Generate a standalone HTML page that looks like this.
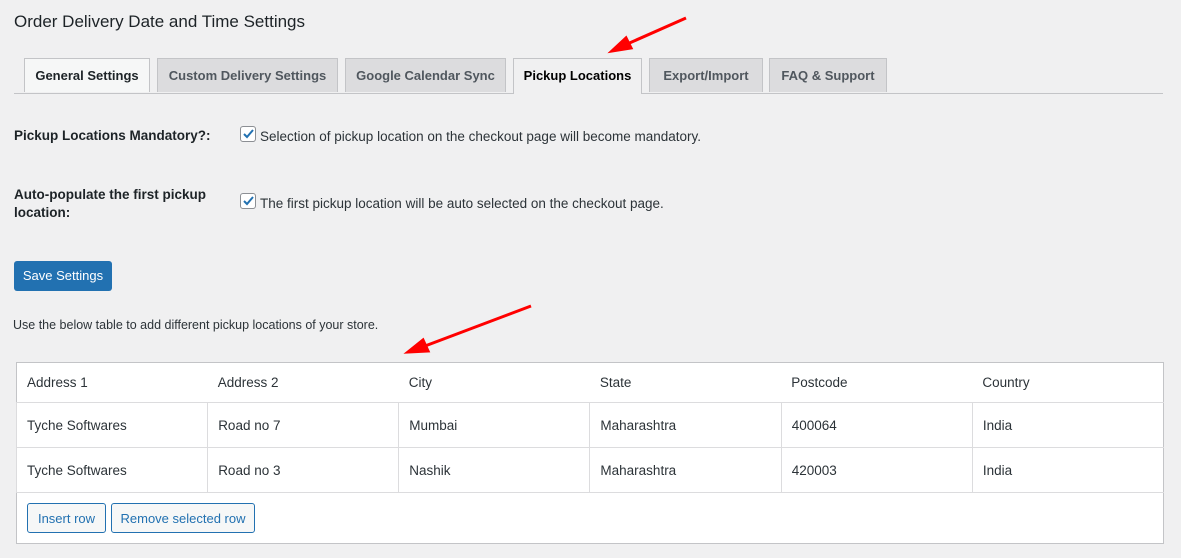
<!DOCTYPE html><html><head><style>
body{margin:0;background:#f0f0f1;font-family:"Liberation Sans",sans-serif;color:#1d2327;width:1181px;height:558px;overflow:hidden;position:relative;font-size:13px}
.a{position:absolute}
.tab{position:absolute;top:58px;height:34px;border:1px solid #c3c4c7;border-bottom:none;background:#dcdcde;font-weight:bold;font-size:13px;color:#50575e;line-height:34px;text-align:center;box-sizing:border-box}
.tab.w{background:#f6f7f7;color:#1d2327}
.tab.act{background:#f0f0f1;height:36px;color:#000}
table{position:absolute;left:16px;top:362px;width:1148px;border-collapse:collapse;background:#fff;border:1px solid #c3c4c7}
td{height:44px;padding:0 10px;border-top:1px solid #dcdcde;font-size:13.5px;color:#2c3338;width:171px}
tr.r td{border-left:1px solid #dcdcde}
tr.h td{height:39px;border-top:none}
.cb{position:absolute;width:14px;height:14px;border:1px solid #8c8f94;border-radius:3px;background:#fff}
.btn{position:absolute;top:503px;height:30px;border:1px solid #2271b1;border-radius:3px;background:#f6f7f7;color:#2271b1;font-size:13px;line-height:30px;text-align:center;box-sizing:border-box}
</style></head><body>
<div class="a" style="left:14px;top:12px;font-size:17px">Order Delivery Date and Time Settings</div>
<div class="a" style="left:14px;top:93px;width:1149px;height:1px;background:#c3c4c7"></div>
<div class="tab w" style="left:24px;width:126px">General Settings</div>
<div class="tab" style="left:157px;width:181px">Custom Delivery Settings</div>
<div class="tab" style="left:345px;width:161px">Google Calendar Sync</div>
<div class="tab act" style="left:513px;width:129px">Pickup Locations</div>
<div class="tab" style="left:649px;width:114px">Export/Import</div>
<div class="tab" style="left:769px;width:118px">FAQ &amp; Support</div>
<div class="a" style="left:14px;top:128px;font-weight:bold;font-size:13.5px">Pickup Locations Mandatory?:</div>
<div class="cb" style="left:240px;top:126px"><svg width="14" height="14"><path d="M3 7l3 3 6-7" stroke="#2271b1" stroke-width="2" fill="none"/></svg></div>
<div class="a" style="left:260px;top:129px;font-size:13.5px;color:#2c3338">Selection of pickup location on the checkout page will become mandatory.</div>
<div class="a" style="left:14px;top:186px;font-weight:bold;font-size:13.5px;line-height:18px">Auto-populate the first pickup<br>location:</div>
<div class="cb" style="left:240px;top:193px"><svg width="14" height="14"><path d="M3 7l3 3 6-7" stroke="#2271b1" stroke-width="2" fill="none"/></svg></div>
<div class="a" style="left:260px;top:196px;font-size:13.5px;color:#2c3338">The first pickup location will be auto selected on the checkout page.</div>
<div class="a" style="left:14px;top:261px;width:98px;height:30px;background:#2271b1;border-radius:3px;color:#fff;line-height:30px;text-align:center">Save Settings</div>
<div class="a" style="left:13px;top:318px;font-size:12.5px;color:#2c3338">Use the below table to add different pickup locations of your store.</div>
<svg class="a" style="left:0;top:0" width="1181" height="400"><g stroke="#f00" stroke-width="3" fill="#f00"><line x1="686" y1="18" x2="625" y2="45"/><path d="M612 51l14-13 5 10z"/><line x1="531" y1="306" x2="425" y2="346"/><path d="M408 352l15-12 5 11z"/></g></svg>
<table>
<tr class="h"><td>Address 1</td><td>Address 2</td><td>City</td><td>State</td><td>Postcode</td><td>Country</td></tr>
<tr class="r"><td>Tyche Softwares</td><td>Road no 7</td><td>Mumbai</td><td>Maharashtra</td><td>400064</td><td>India</td></tr>
<tr class="r"><td>Tyche Softwares</td><td>Road no 3</td><td>Nashik</td><td>Maharashtra</td><td>420003</td><td>India</td></tr>
<tr><td colspan="6" style="height:50px"></td></tr>
</table>
<div class="btn" style="left:27px;width:79px">Insert row</div>
<div class="btn" style="left:111px;width:144px">Remove selected row</div>
</body></html>
